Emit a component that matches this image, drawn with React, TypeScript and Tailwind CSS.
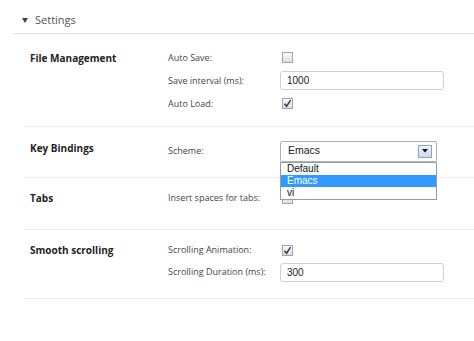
import React from "react";

function Checkbox({ checked }: { checked?: boolean }) {
  return (
    <span className="ml-[2px] flex h-[11px] w-[11px] items-center justify-center border border-[#a3a3a3] bg-gradient-to-b from-[#fbfbfb] to-[#dedede]">
      {checked && (
        <svg width="9" height="9" viewBox="0 0 9 9">
          <path d="M1.5 4.8 L3.6 7.2 L7.6 1.2" fill="none" stroke="#2c3b5a" strokeWidth="1.5" />
        </svg>
      )}
    </span>
  );
}

function TextBox({ value }: { value: string }) {
  return (
    <div className="flex h-[19px] w-[164px] items-center rounded-[3px] border border-[#cfcfcf] pl-[6px] font-['Liberation_Sans',Arial,sans-serif] text-[10px] text-[#222]">
      {value}
    </div>
  );
}

function Label({ children }: { children: React.ReactNode }) {
  return <div className="w-[112px] text-[9px] text-[#444]">{children}</div>;
}

export default function App() {
  return (
    <div className="h-[341px] w-[474px] overflow-hidden bg-white font-['Open_Sans',sans-serif]">
      <div className="ml-[13px] flex h-[34px] items-center gap-[7px] border-b border-[#e2e2e2] pl-[9px] pt-[7px]">
        <svg width="6" height="5" viewBox="0 0 6 5">
          <polygon points="0,0 6,0 3,5" fill="#444" />
        </svg>
        <span className="text-[11px] text-[#555]">Settings</span>
      </div>

      {/* File Management */}
      <div className="ml-[24px] flex border-b border-[#eeeeee] pb-[11px] pt-[12px]">
        <div className="mt-[4px] w-[144px] pl-[6px] text-[10px] font-bold leading-[16px] text-[#222]">
          File Management
        </div>
        <div className="flex flex-col">
          <div className="flex h-[23px] items-center">
            <Label>Auto Save:</Label>
            <Checkbox />
          </div>
          <div className="flex h-[23px] items-center">
            <Label>Save interval (ms):</Label>
            <TextBox value="1000" />
          </div>
          <div className="flex h-[23px] items-center">
            <Label>Auto Load:</Label>
            <Checkbox checked />
          </div>
        </div>
      </div>

      {/* Key Bindings */}
      <div className="relative z-10 ml-[24px] flex border-b border-[#eeeeee] pb-[15px] pt-[13px]">
        <div className="w-[144px] pl-[6px] text-[10px] font-bold leading-[16px] text-[#222]">Key Bindings</div>
        <div className="flex h-[22px] items-center">
          <Label>Scheme:</Label>
          <div className="relative">
            <div className="relative flex h-[21px] w-[157px] items-center rounded-[2px] border border-[#b0b0b0] pl-[7px] font-['Liberation_Sans',Arial,sans-serif] text-[10.5px] text-[#222]">
              Emacs
              <div className="absolute right-[4px] top-[3px] flex h-[13px] w-[14px] items-center justify-center border border-[#8aa3bf] bg-gradient-to-b from-[#eef3f9] to-[#cfdcec]">
                <svg width="6" height="4" viewBox="0 0 6 4">
                  <polygon points="0,0 6,0 3,3.5" fill="#111" />
                </svg>
              </div>
            </div>
            <div className="absolute left-0 top-full w-[157px] border border-[#8e9eb2] bg-white font-['Liberation_Sans',Arial,sans-serif] text-[10px] text-[#111]">
              <div className="h-[12px] pl-[6px] leading-[12px]">Default</div>
              <div className="h-[12px] bg-[#3399ff] pl-[6px] leading-[12px] text-white">Emacs</div>
              <div className="h-[12px] pl-[6px] leading-[12px]">vi</div>
            </div>
          </div>
        </div>
      </div>

      {/* Tabs */}
      <div className="ml-[24px] flex border-b border-[#eeeeee] pb-[20px] pt-[9px]">
        <div className="mt-[3px] w-[144px] pl-[6px] text-[10px] font-bold leading-[16px] text-[#222]">Tabs</div>
        <div className="flex h-[22px] items-center">
          <Label>Insert spaces for tabs:</Label>
          <Checkbox />
        </div>
      </div>

      {/* Smooth scrolling */}
      <div className="ml-[24px] flex border-b border-[#eeeeee] pb-[15px] pt-[9px]">
        <div className="mt-[3px] w-[144px] pl-[6px] text-[10px] font-bold leading-[16px] text-[#222]">
          Smooth scrolling
        </div>
        <div className="flex flex-col">
          <div className="flex h-[22px] items-center">
            <Label>Scrolling Animation:</Label>
            <Checkbox checked />
          </div>
          <div className="flex h-[22px] items-center">
            <Label>Scrolling Duration (ms):</Label>
            <TextBox value="300" />
          </div>
        </div>
      </div>
    </div>
  );
}
